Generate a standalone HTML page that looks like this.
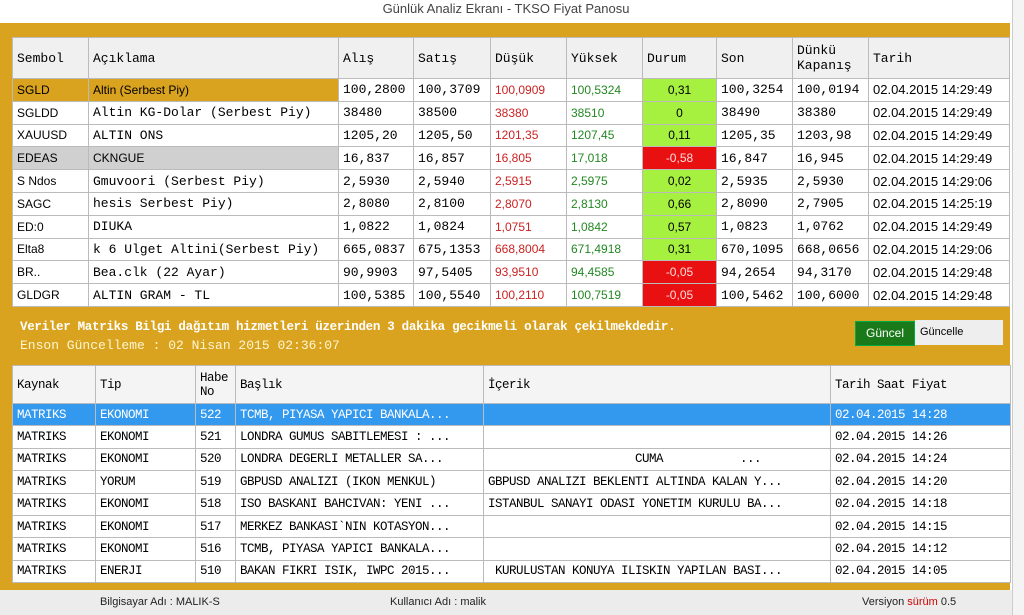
<!DOCTYPE html><html><head><meta charset="utf-8"><style>
body{margin:0;width:1024px;height:615px;overflow:hidden;background:#fff;font-family:"Liberation Sans",sans-serif;position:relative}
.title{position:absolute;top:0;left:0;width:1012px;height:22px;text-align:center;font-size:13px;color:#444;line-height:18px}
.frame{position:absolute;top:23px;left:0;width:1010px;height:567px;background:#d9a21f}
.rs{position:absolute;top:0;left:1012px;width:12px;height:615px;background:#f4f4f4;border-left:1px solid #ccc}
table{border-collapse:collapse;position:absolute;background:#fff;table-layout:fixed}
td{border:1px solid #bbb;padding:0 4px;white-space:nowrap;overflow:hidden;font-size:13px}
.t1{left:12px;top:37px;width:997px;border:1px solid #333;font-family:"Liberation Mono",monospace}
.t1 tr.h td{height:40px;background:#f0f0f0;font-family:"Liberation Mono",monospace;font-size:13px;line-height:15px}
.t1 td{height:21.8px}
.r{color:#c22}.g{color:#282}
.dg{background:#a6f040;text-align:center}.dr{background:#e81010;color:#fdd;text-align:center}
.sans{font-family:"Liberation Sans",sans-serif;font-size:12px}
.t2{left:12px;top:365px;width:998px;font-family:"Liberation Mono",monospace;border:1px solid #333}
.t2 td{height:21.4px;font-size:12.5px;letter-spacing:-0.5px}
.t2 tr.h td{height:37px;background:#f4f4f4;line-height:14px}
.sel td{background:#3399ee;color:#fff}
.msg{position:absolute;left:20px;top:320px;color:#fff;font-family:"Liberation Mono",monospace;font-size:12.5px;font-weight:bold;letter-spacing:-0.3px}
.msg2{position:absolute;left:20px;top:338px;color:#fff6d0;font-family:"Liberation Mono",monospace;font-size:13px}
.b1{position:absolute;left:855px;top:321px;width:58px;height:23px;background:#1a7a1a;color:#fff;font-size:12px;line-height:23px;text-align:center;border:1px solid #0a4}
.b2{position:absolute;left:915px;top:320px;width:88px;height:25px;background:#eee;font-size:11px;line-height:25px;padding-left:5px;box-sizing:border-box}
.status{position:absolute;top:590px;left:0;width:1012px;height:25px;background:#ececec;font-size:11px;color:#222;line-height:25px}
</style></head><body>
<div class="title">Günlük Analiz Ekranı - TKSO Fiyat Panosu</div>
<div class="frame"></div><div class="rs"></div>
<table class="t1">
<col style="width:76px"><col style="width:250px"><col style="width:75px"><col style="width:77px"><col style="width:76px"><col style="width:76px"><col style="width:74px"><col style="width:76px"><col style="width:76px"><col style="width:141px">
<tr class="h"><td>Sembol</td><td>Açıklama</td><td>Alış</td><td>Satış</td><td>Düşük</td><td>Yüksek</td><td>Durum</td><td>Son</td><td>Dünkü<br>Kapanış</td><td>Tarih</td></tr>
<tr><td class="sans" style="background:#d9a21f">SGLD</td><td class="sans" style="background:#d9a21f">Altin (Serbest Piy)</td><td>100,2800</td><td>100,3709</td><td class="r sans">100,0909</td><td class="g sans">100,5324</td><td class="dg sans">0,31</td><td>100,3254</td><td>100,0194</td><td class="sans" style="font-size:13px">02.04.2015 14:29:49</td></tr>
<tr><td class="sans">SGLDD</td><td>Altin KG-Dolar (Serbest Piy)</td><td>38480</td><td>38500</td><td class="r sans">38380</td><td class="g sans">38510</td><td class="dg sans">0</td><td>38490</td><td>38380</td><td class="sans" style="font-size:13px">02.04.2015 14:29:49</td></tr>
<tr><td class="sans">XAUUSD</td><td>ALTIN ONS</td><td>1205,20</td><td>1205,50</td><td class="r sans">1201,35</td><td class="g sans">1207,45</td><td class="dg sans">0,11</td><td>1205,35</td><td>1203,98</td><td class="sans" style="font-size:13px">02.04.2015 14:29:49</td></tr>
<tr><td class="sans" style="background:#d0d0d0">EDEAS</td><td class="sans" style="background:#d0d0d0">CKNGUE</td><td>16,837</td><td>16,857</td><td class="r sans">16,805</td><td class="g sans">17,018</td><td class="dr sans">-0,58</td><td>16,847</td><td>16,945</td><td class="sans" style="font-size:13px">02.04.2015 14:29:49</td></tr>
<tr><td class="sans">S Ndos</td><td>Gmuvoori (Serbest Piy)</td><td>2,5930</td><td>2,5940</td><td class="r sans">2,5915</td><td class="g sans">2,5975</td><td class="dg sans">0,02</td><td>2,5935</td><td>2,5930</td><td class="sans" style="font-size:13px">02.04.2015 14:29:06</td></tr>
<tr><td class="sans">SAGC</td><td>hesis Serbest Piy)</td><td>2,8080</td><td>2,8100</td><td class="r sans">2,8070</td><td class="g sans">2,8130</td><td class="dg sans">0,66</td><td>2,8090</td><td>2,7905</td><td class="sans" style="font-size:13px">02.04.2015 14:25:19</td></tr>
<tr><td class="sans">ED:0</td><td>DIUKA</td><td>1,0822</td><td>1,0824</td><td class="r sans">1,0751</td><td class="g sans">1,0842</td><td class="dg sans">0,57</td><td>1,0823</td><td>1,0762</td><td class="sans" style="font-size:13px">02.04.2015 14:29:49</td></tr>
<tr><td class="sans">Elta8</td><td>k 6 Ulget Altini(Serbest Piy)</td><td>665,0837</td><td>675,1353</td><td class="r sans">668,8004</td><td class="g sans">671,4918</td><td class="dg sans">0,31</td><td>670,1095</td><td>668,0656</td><td class="sans" style="font-size:13px">02.04.2015 14:29:06</td></tr>
<tr><td class="sans">BR..</td><td>Bea.clk (22 Ayar)</td><td>90,9903</td><td>97,5405</td><td class="r sans">93,9510</td><td class="g sans">94,4585</td><td class="dr sans">-0,05</td><td>94,2654</td><td>94,3170</td><td class="sans" style="font-size:13px">02.04.2015 14:29:48</td></tr>
<tr><td class="sans">GLDGR</td><td>ALTIN GRAM - TL</td><td>100,5385</td><td>100,5540</td><td class="r sans">100,2110</td><td class="g sans">100,7519</td><td class="dr sans">-0,05</td><td>100,5462</td><td>100,6000</td><td class="sans" style="font-size:13px">02.04.2015 14:29:48</td></tr>
</table>
<div class="msg">Veriler Matriks Bilgi dağıtım hizmetleri üzerinden 3 dakika gecikmeli olarak çekilmekdedir.</div>
<div class="msg2">Enson Güncelleme : 02 Nisan 2015 02:36:07</div>
<div class="b1">Güncel</div><div class="b2">Güncelle</div>
<table class="t2">
<col style="width:83px"><col style="width:100px"><col style="width:40px"><col style="width:248px"><col style="width:347px"><col style="width:180px">
<tr class="h"><td>Kaynak</td><td>Tip</td><td>Habe<br>No</td><td>Başlık</td><td>İçerik</td><td>Tarih Saat Fiyat</td></tr>
<tr class="sel"><td>MATRIKS</td><td>EKONOMI</td><td>522</td><td>TCMB, PIYASA YAPICI BANKALA...</td><td></td><td>02.04.2015 14:28</td></tr>
<tr><td>MATRIKS</td><td>EKONOMI</td><td>521</td><td>LONDRA GUMUS SABITLEMESI : ...</td><td></td><td>02.04.2015 14:26</td></tr>
<tr><td>MATRIKS</td><td>EKONOMI</td><td>520</td><td>LONDRA DEGERLI METALLER  SA...</td><td>&nbsp;&nbsp;&nbsp;&nbsp;&nbsp;&nbsp;&nbsp;&nbsp;&nbsp;&nbsp;&nbsp;&nbsp;&nbsp;&nbsp;&nbsp;&nbsp;&nbsp;&nbsp;&nbsp;&nbsp;&nbsp;CUMA&nbsp;&nbsp;&nbsp;&nbsp;&nbsp;&nbsp;&nbsp;&nbsp;&nbsp;&nbsp;&nbsp;...</td><td>02.04.2015 14:24</td></tr>
<tr><td>MATRIKS</td><td>YORUM</td><td>519</td><td>GBPUSD  ANALIZI (IKON MENKUL)</td><td>GBPUSD ANALIZI BEKLENTI ALTINDA KALAN Y...</td><td>02.04.2015 14:20</td></tr>
<tr><td>MATRIKS</td><td>EKONOMI</td><td>518</td><td>ISO BASKANI BAHCIVAN: YENI ...</td><td>ISTANBUL SANAYI ODASI YONETIM KURULU BA...</td><td>02.04.2015 14:18</td></tr>
<tr><td>MATRIKS</td><td>EKONOMI</td><td>517</td><td>MERKEZ BANKASI`NIN KOTASYON...</td><td></td><td>02.04.2015 14:15</td></tr>
<tr><td>MATRIKS</td><td>EKONOMI</td><td>516</td><td>TCMB, PIYASA YAPICI BANKALA...</td><td></td><td>02.04.2015 14:12</td></tr>
<tr><td>MATRIKS</td><td>ENERJI</td><td>510</td><td>BAKAN FIKRI ISIK, IWPC 2015...</td><td>&nbsp;KURULUSTAN KONUYA ILISKIN YAPILAN BASI...</td><td>02.04.2015 14:05</td></tr>
</table>
<div class="status"><span style="position:absolute;left:100px">Bilgisayar Adı : MALIK-S</span><span style="position:absolute;left:390px">Kullanıcı Adı : malik</span><span style="position:absolute;left:862px">Versiyon <span style="color:#c00">sürüm</span> 0.5</span></div>
</body></html>
